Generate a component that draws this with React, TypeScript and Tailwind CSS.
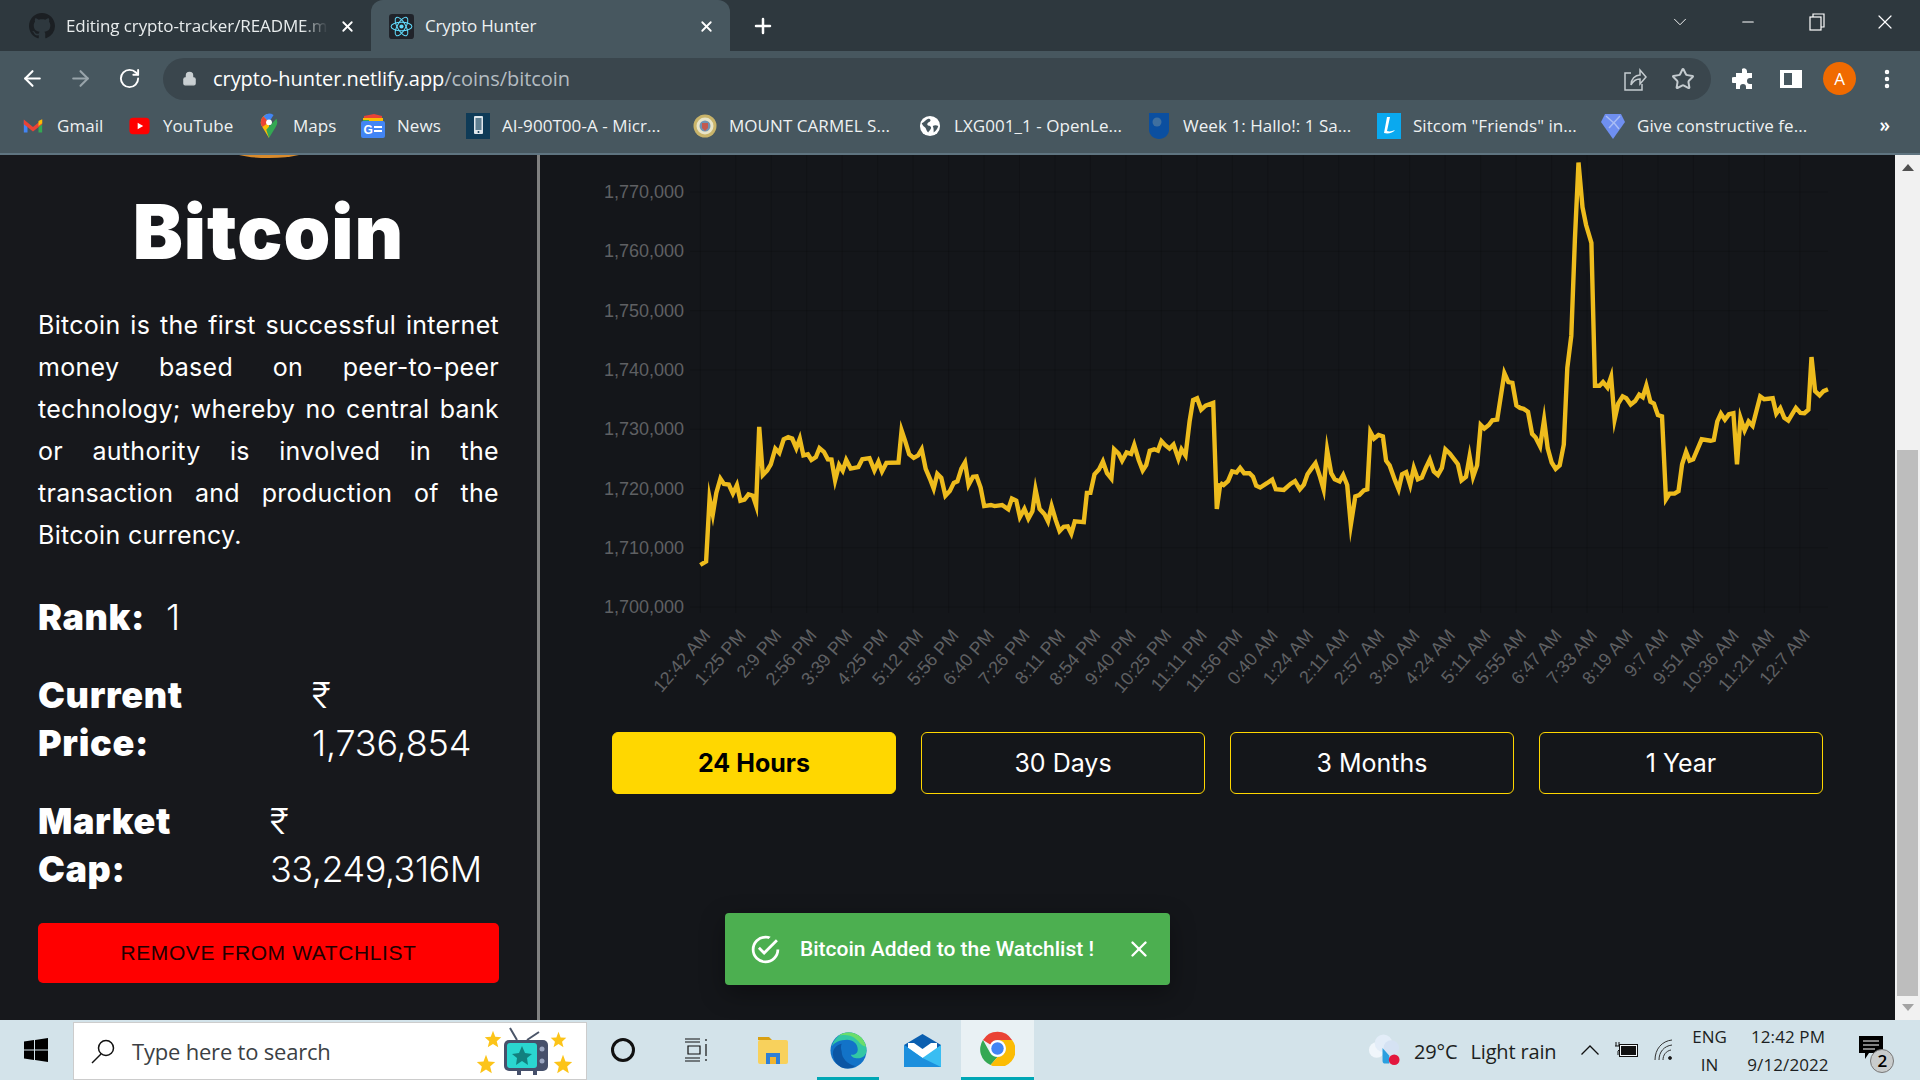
import { ArrowLeft, ArrowRight, ChevronDown, Lock, Minus, MoreVertical, Plus, RotateCw, Star, X } from "lucide-react";

const leftPts = [[359,1162],[372,1152],[380,975],[387,1020],[395,960],[404,920],[412,935],[423,937],[432,962],[441,938],[449,982],[458,979],[467,964],[477,968],[484,995],[491,775],[499,910],[509,897],[517,880],[527,836],[536,848],[546,810],[556,804],[565,808],[574,835],[582,808],[590,855],[600,852],[608,868],[618,860],[626,835],[636,845],[645,866],[653,867],[661,925],[670,882],[678,898],[686,868],[696,892],[713,888],[722,866],[738,863],[749,897],[758,873],[766,900],[776,876],[803,875],[810,785],[818,815],[827,852],[837,862],[847,855],[855,838],[864,893],[875,925],[882,948],[890,907],[899,918],[908,968],[918,955],[927,932],[935,928],[944,892],[952,875],[960,938],[970,915],[978,914],[987,945],[995,997],[1010,994],[1018,997],[1035,994],[1049,1006],[1057,976],[1067,982],[1075,1028],[1085,1005],[1094,1032],[1103,1012],[1110,950],[1119,1005],[1130,1020],[1138,1040],[1146,997],[1155,1035],[1164,1067],[1173,1055],[1182,1054],[1190,1074],[1198,1040],[1218,1042],[1225,960],[1233,960],[1242,908],[1252,895],[1261,872],[1270,905],[1280,920],[1286,838],[1296,850],[1304,870],[1314,847],[1324,851],[1331,826],[1341,868],[1350,897],[1358,882],[1366,842],[1376,838],[1384,842],[1392,815],[1400,826],[1410,836],[1419,825],[1430,865],[1437,838],[1446,855],[1455,760],[1463,700],[1472,695],[1481,727],[1491,716],[1508,708],[1516,1005],[1524,933]];
const rightPts = [[0,932],[8,938],[18,927],[27,900],[37,903],[45,890],[54,905],[66,905],[74,915],[81,940],[90,945],[105,933],[117,923],[125,950],[143,952],[158,935],[168,927],[179,950],[188,937],[196,908],[206,890],[214,877],[224,915],[232,950],[240,840],[249,905],[257,922],[268,928],[276,910],[285,938],[293,1050],[303,970],[312,966],[322,953],[330,950],[337,790],[345,808],[355,798],[365,802],[372,870],[380,883],[392,925],[400,950],[408,908],[417,902],[426,938],[434,890],[443,922],[452,917],[461,890],[470,867],[479,900],[488,910],[497,890],[505,838],[515,850],[533,880],[541,925],[551,915],[559,858],[567,915],[576,883],[584,770],[592,780],[602,770],[610,757],[621,755],[637,625],[646,650],[655,652],[664,715],[672,722],[680,725],[690,733],[699,795],[707,805],[717,830],[726,755],[734,835],[743,875],[752,893],[761,883],[770,825],[778,610],[787,520],[795,250],[803,35],[812,160],[820,210],[832,260],[840,660],[850,660],[858,650],[868,665],[876,635],[884,755],[892,710],[902,690],[910,695],[920,713],[930,703],[939,685],[947,692],[955,660],[964,705],[972,710],[981,742],[990,746],[999,978],[1007,962],[1018,962],[1027,955],[1035,880],[1044,845],[1052,870],[1060,866],[1079,810],[1099,814],[1106,812],[1114,760],[1122,738],[1131,755],[1140,740],[1150,737],[1158,880],[1166,750],[1175,785],[1184,760],[1193,772],[1210,690],[1219,698],[1238,695],[1246,738],[1255,723],[1264,750],[1273,758],[1290,722],[1300,736],[1309,737],[1318,727],[1325,580],[1333,675],[1343,687],[1352,675],[1362,670]];

// traced points are in zoomed crop units, bring them back to chart px
const linePoints = [
	...leftPts.map(([x, y]) => [x / 2.24, y / 2.8 - 5]),
	...rightPts.map(([x, y]) => [x / 2.24 + 680, y / 2.8 - 5]),
]
	.map(([x, y]) => `${x.toFixed(1)},${y.toFixed(1)}`)
	.join(" ");

const yLabels = ["1,770,000", "1,760,000", "1,750,000", "1,740,000", "1,730,000", "1,720,000", "1,710,000", "1,700,000"];
const xLabels = ["12:42 AM", "1:25 PM", "2:9 PM", "2:56 PM", "3:39 PM", "4:25 PM", "5:12 PM", "5:56 PM", "6:40 PM", "7:26 PM", "8:11 PM", "8:54 PM", "9:40 PM", "10:25 PM", "11:11 PM", "11:56 PM", "0:40 AM", "1:24 AM", "2:11 AM", "2:57 AM", "3:40 AM", "4:24 AM", "5:11 AM", "5:55 AM", "6:47 AM", "7:33 AM", "8:19 AM", "9:7 AM", "9:51 AM", "10:36 AM", "11:21 AM", "12:7 AM"];

function Chart() {
	return (
		<svg width="1355" height="577" viewBox="0 0 1355 577" className="block shrink-0" style={{ fontFamily: '"Liberation Sans", sans-serif' }}>
			{yLabels.map((label, i) => {
				const y = 37 + i * 59.3;
				return (
					<g key={label}>
						<line x1="150" x2="1288" y1={y} y2={y} stroke="#000" strokeOpacity="0.15" />
						<text x="144" y={y + 6} textAnchor="end" fontSize="18" fill="#5f6063">{label}</text>
					</g>
				);
			})}
			{xLabels.map((label, i) => {
				const x = 160.3 + i * 35.47;
				return (
					<g key={label}>
						<line x1={x} x2={x} y1="0" y2="458" stroke="#000" strokeOpacity="0.15" />
						<text x={x + 11} y="481" textAnchor="end" fontSize="18" fill="#5f6063" transform={`rotate(-49 ${x + 11} 481)`}>{label}</text>
					</g>
				);
			})}
			<polyline points={linePoints} fill="none" stroke="#EEBC1D" strokeWidth="4.4" strokeLinejoin="miter" strokeMiterlimit="10" />
		</svg>
	);
}

function GmailIcon() {
	return (
		<svg width="22" height="22" viewBox="0 0 24 24">
			<path d="M2 6v13h4V10z" fill="#4285f4" />
			<path d="M22 6v13h-4V10z" fill="#34a853" />
			<path d="M2 5l10 8 10-8v5l-10 8-10-8z" fill="#ea4335" />
			<path d="M18 6.5l4-2V9l-4 3z" fill="#fbbc04" />
		</svg>
	);
}

function YoutubeIcon() {
	return (
		<svg width="23" height="22" viewBox="0 0 24 24">
			<rect x="1" y="3" width="22" height="18" rx="4" fill="#f00" />
			<path d="M10 8.5l6 3.5-6 3.5z" fill="#fff" />
		</svg>
	);
}

function MapsIcon() {
	return (
		<svg width="22" height="26" viewBox="0 0 24 28">
			<path d="M12 1a9 9 0 0 0-9 9c0 2 .7 3.5 1.7 5L12 27z" fill="#fbbc04" />
			<path d="M12 27l7.3-12c1-1.500 1.700-3 1.700-5 0-1.500-.4-3-1-4L9 18z" fill="#34a853" />
			<path d="M3 10a9 9 0 0 1 3-6.700L12 10l-7.300 5C3.700 13.500 3 12 3 10z" fill="#ea4335" />
			<path d="M6 3.300A9 9 0 0 1 17 2l-5 8z" fill="#4285f4" />
			<circle cx="12" cy="10" r="3.200" fill="#fff" />
		</svg>
	);
}

function NewsIcon() {
	return (
		<svg width="24" height="26" viewBox="0 0 24 26">
			<path d="M3 3l10-2 8 2v6H3z" fill="#ea4335" />
			<path d="M2 5h20v5H2z" fill="#fbbc04" />
			<path d="M2 7h6v3H2z" fill="#34a853" />
			<rect x="0" y="8" width="24" height="17" rx="2" fill="#4285f4" />
			<text x="2.500" y="21" fontSize="12" fontWeight="700" fill="#fff" fontFamily="Liberation Sans">G</text>
			<path d="M13 13h8v2h-8zM13 17h8v2h-8z" fill="#fff" />
		</svg>
	);
}

function DocIcon() {
	return (
		<svg width="24" height="26" viewBox="0 0 24 26">
			<rect width="24" height="26" fill="#0f3b57" />
			<rect x="8" y="3" width="9" height="18" rx="1" fill="#dfe7ec" />
			<rect x="9.500" y="5" width="6" height="12" fill="#5f7f91" />
			<circle cx="12.500" cy="19" r="1" fill="#0f3b57" />
		</svg>
	);
}

function CrestIcon() {
	return (
		<svg width="24" height="24" viewBox="0 0 24 24">
			<circle cx="12" cy="12" r="11.500" fill="#c9b46a" />
			<circle cx="12" cy="12" r="8.500" fill="#e8e4c8" />
			<circle cx="12" cy="12" r="5.500" fill="#6f93b2" />
			<path d="M9 9h6v5l-3 3-3-3z" fill="#c25a4f" />
		</svg>
	);
}

function GlobeIcon() {
	return (
		<svg width="22" height="22" viewBox="0 0 24 24">
			<circle cx="12" cy="12" r="11" fill="#fff" />
			<path d="M3 9c3-1 4-4 7-5 3 0 3 2 2 3s-3 1-3 3 3 1 4 3-2 4-3 6c-2-1-2-4-3-5s-3-2-4-5zM15 12c2-1 4-1 6 0-1 3-2 5-5 7 0-3 0-5-1-7z" fill="#47575f" />
		</svg>
	);
}

function ShieldIcon() {
	return (
		<svg width="22" height="26" viewBox="0 0 22 26">
			<path d="M1 0h20v17c0 5-5 9-10 9S1 22 1 17z" fill="#0b4fa0" />
			<circle cx="9" cy="9" r="4.500" fill="#3f6f9f" />
		</svg>
	);
}

function LingqIcon() {
	return (
		<svg width="24" height="26" viewBox="0 0 24 26">
			<rect width="24" height="26" fill="#0aa9ef" />
			<path d="M13 4l-3 14c3 1 5 0 8-1-2 3-7 4-11 3l3-16z" fill="#fff" />
		</svg>
	);
}

function GemIcon() {
	return (
		<svg width="24" height="26" viewBox="0 0 24 26">
			<path d="M4 1h16l4 8-12 17L0 9z" fill="#6f8ff0" />
			<path d="M5 3l9 8M19 3L8 15M14 11l4 5" stroke="#a9bdf5" strokeWidth="1.500" fill="none" />
		</svg>
	);
}

const bookmarks = [
	{ icon: <GmailIcon />, label: "Gmail", width: "w-[46px]" },
	{ icon: <YoutubeIcon />, label: "YouTube", width: "w-[70px]" },
	{ icon: <MapsIcon />, label: "Maps", width: "w-[44px]" },
	{ icon: <NewsIcon />, label: "News", width: "w-[45px]" },
	{ icon: <DocIcon />, label: "AI-900T00-A - Micr...", width: "w-[167px]" },
	{ icon: <CrestIcon />, label: "MOUNT CARMEL S...", width: "w-[165px]" },
	{ icon: <GlobeIcon />, label: "LXG001_1 - OpenLe...", width: "w-[169px]" },
	{ icon: <ShieldIcon />, label: "Week 1: Hallo!: 1 Sa...", width: "w-[170px]" },
	{ icon: <LingqIcon />, label: 'Sitcom "Friends" in...', width: "w-[164px]" },
	{ icon: <GemIcon />, label: "Give constructive fe...", width: "w-[169px]" },
];

function ReactFavicon() {
	return (
		<svg width="25" height="25" viewBox="0 0 24 24">
			<rect width="24" height="24" rx="3" fill="#20232a" />
			<g stroke="#61dafb" strokeWidth="1" fill="none">
				<ellipse cx="12" cy="12" rx="10" ry="4" />
				<ellipse cx="12" cy="12" rx="10" ry="4" transform="rotate(60 12 12)" />
				<ellipse cx="12" cy="12" rx="10" ry="4" transform="rotate(120 12 12)" />
			</g>
			<circle cx="12" cy="12" r="2" fill="#61dafb" />
		</svg>
	);
}

function GithubFavicon() {
	return (
		<svg width="26" height="26" viewBox="0 0 16 16" fill="#1b1f23">
			<path d="M8 0C3.580 0 0 3.580 0 8c0 3.540 2.290 6.530 5.470 7.590.4.070.55-.17.55-.38 0-.19-.01-.82-.01-1.490-2.010.37-2.530-.49-2.690-.94-.09-.23-.48-.94-.82-1.130-.28-.15-.68-.52-.01-.53.63-.01 1.080.58 1.230.82.720 1.210 1.870.870 2.330.660.070-.520.280-.870.510-1.070-1.780-.200-3.640-.890-3.640-3.950 0-.870.310-1.590.820-2.150-.080-.200-.360-1.020.080-2.120 0 0 .670-.210 2.200.820.640-.180 1.320-.270 2-.270s1.360.090 2 .270c1.530-1.040 2.200-.820 2.200-.820.440 1.100.160 1.920.080 2.120.510.560.820 1.270.820 2.150 0 3.070-1.870 3.750-3.650 3.950.290.250.540.730.540 1.480 0 1.070-.010 1.930-.010 2.200 0 .210.150.460.550.380A8.010 8.010 0 0 0 16 8c0-4.420-3.580-8-8-8z" />
		</svg>
	);
}

function ChromeBar() {
	return (
		<div className="shrink-0 font-['Open_Sans',sans-serif] text-white">
			{/* tab strip */}
			<div className="flex h-[51px] bg-[#2e383e]">
				<div className="flex w-[371px] shrink-0 items-center pl-[29px] pt-[1px]">
					<GithubFavicon />
					<span className="ml-[11px] w-[262px] overflow-hidden whitespace-nowrap text-[17px] tracking-[-0.1px] text-[#e8eced] [mask-image:linear-gradient(to_right,black_90%,transparent)]">Editing crypto-tracker/README.md</span>
					<X size={17} strokeWidth={2.500} className="ml-[11px]" />
				</div>
				<div className="flex w-[359px] shrink-0 items-center rounded-t-[12px] bg-[#47575f] pl-[18px] pt-[1px]">
					<ReactFavicon />
					<span className="ml-[11px] w-[274px] text-[17px] tracking-[-0.15px] text-[#eef1f2]">Crypto Hunter</span>
					<X size={17} strokeWidth={2.500} className="ml-[-1px]" />
				</div>
				<Plus size={24} strokeWidth={2.500} className="ml-[21px] mt-[14px]" />
				<div className="ml-auto flex h-[44px] items-center">
					<ChevronDown size={22} strokeWidth={1} className="mr-[48px]" />
					<Minus size={18} strokeWidth={1.500} className="mr-[52px]" />
					<svg width="18" height="18" viewBox="0 0 18 18" fill="none" stroke="#fff" strokeWidth="1.200" className="mr-[46px]">
						<rect x="1" y="4" width="11" height="13" />
						<path d="M4 4V1h11v13h-3" />
					</svg>
					<X size={24} strokeWidth={1.200} className="mr-[23px]" />
				</div>
			</div>
			{/* address bar */}
			<div className="flex h-[51px] items-center bg-[#47575f] pt-[4px]">
				<ArrowLeft size={25} strokeWidth={2} className="ml-[20px]" />
				<ArrowRight size={25} strokeWidth={2} className="ml-[23px] text-[#98a4aa]" />
				<RotateCw size={23} strokeWidth={2} className="ml-[25px]" />
				<div className="ml-[22px] flex h-[42px] w-[1548px] items-center rounded-full bg-[#3a464d] pl-[19px]">
					<Lock size={15} strokeWidth={2} fill="#c9cfd2" className="text-[#c9cfd2]" />
					<span className="ml-[16px] text-[20px] tracking-[-0.05px] text-white">crypto-hunter.netlify.app<span className="text-[#b4bcc1]">/coins/bitcoin</span></span>
					<svg width="24" height="26" viewBox="0 0 24 26" fill="none" stroke="#c4cbcf" strokeWidth="1.500" className="ml-auto mr-[24px]">
						<path d="M8 7H2v17h17v-6" />
						<path d="M8 19c0-6 4-10 9-10V4l6 7-6 7v-5c-4 0-7 2-9 6z" />
					</svg>
					<Star size={24} strokeWidth={2} className="mr-[16px] text-[#c4cbcf]" />
				</div>
				<svg width="24" height="24" viewBox="0 0 24 24" fill="#fff" className="ml-[21px]">
					<path d="M10 2a3 3 0 0 1 5 2v2h5v5h-2a3 3 0 0 0 0 6h2v5h-6v-2a3 3 0 0 0-6 0v2H4v-6H2a3 3 0 0 1 0-6h2V6h6z" />
				</svg>
				<div className="ml-[24px] h-[18px] w-[22px] border-[3px] border-l-[4px] border-r-[10px] border-white" />
				<div className="ml-[21px] flex h-[33px] w-[33px] items-center justify-center rounded-full bg-[#f06a00] text-[17px]">A</div>
				<MoreVertical size={24} strokeWidth={2.500} className="ml-[19px]" />
			</div>
			{/* bookmarks */}
			<div className="flex h-[51px] items-center bg-[#47575f] pb-[4px] pl-[21px]">
				{bookmarks.map((b) => (
					<div key={b.label} className="mr-[24px] flex items-center">
						<div className="flex w-[24px] justify-center">{b.icon}</div>
						<span className={`ml-[12px] whitespace-nowrap text-[17px] tracking-[0.05px] text-[#eef1f2] ${b.width}`}>{b.label}</span>
					</div>
				))}
				<span className="ml-auto mr-[30px] text-[19px] font-semibold">»</span>
			</div>
			<div className="h-[2px] bg-[#5f7480]" />
		</div>
	);
}

const descLines = [
	"Bitcoin is the first successful internet",
	"money based on peer-to-peer",
	"technology; whereby no central bank",
	"or authority is involved in the",
	"transaction and production of the",
];

function CoinPanel() {
	return (
		<aside className="flex w-[540px] shrink-0 flex-col border-r-[3px] border-[#808080] bg-[#17181c] font-['Inter',sans-serif] text-white">
			<svg width="60" height="3" viewBox="0 0 60 3" className="mx-auto block">
				<path d="M0 0h60c-8 2-18 3-30 3S8 2 0 0z" fill="#d98a2b" />
			</svg>
			<h1 className="mt-[31px] text-center text-[75px] font-black leading-[86px] tracking-[1px]">Bitcoin</h1>
			<div className="mt-[29px] px-[38px] text-[25px] font-normal leading-[42px] tracking-[0.3px]">
				{descLines.map((line) => (
					<p key={line} className="[text-align-last:justify]">{line}</p>
				))}
				<p>Bitcoin currency.</p>
			</div>
			<div className="mt-[37px] flex items-center px-[38px] text-[36px] leading-[48px] tracking-[0.6px]">
				<span className="font-black">Rank:</span>
				<span className="ml-[21px] font-light">1</span>
			</div>
			<div className="mt-[30px] flex px-[38px] text-[36px] leading-[48px]">
				<span className="w-[274px] font-black tracking-[0.7px]">Current<br />Price:</span>
				<span className="font-light tracking-[-0.2px]">₹<br />1,736,854</span>
			</div>
			<div className="mt-[30px] flex px-[38px] text-[36px] leading-[48px]">
				<span className="w-[232px] font-black tracking-[0.6px]">Market<br />Cap:</span>
				<span className="font-light tracking-[-0.5px]">₹<br />33,249,316M</span>
			</div>
			<button type="button" className="mx-[38px] mt-[30px] h-[60px] rounded-[5px] bg-[#f00] font-['Liberation_Sans',sans-serif] text-[21px] tracking-[0.6px] text-[#210000]">REMOVE FROM WATCHLIST</button>
		</aside>
	);
}

function Toast() {
	return (
		<div className="absolute left-[725px] top-[758px] flex h-[72px] w-[445px] items-center rounded-[4px] bg-[#4caf50] font-['Roboto',sans-serif] text-white shadow-[0_8px_24px_rgba(0,0,0,0.35)]">
			<svg width="33" height="33" viewBox="0 0 24 24" fill="#fff" className="ml-[24px]">
				<path d="M20,12A8,8 0 0,1 12,20A8,8 0 0,1 4,12A8,8 0 0,1 12,4C12.76,4 13.5,4.11 14.2,4.31L15.77,2.74C14.61,2.26 13.34,2 12,2A10,10 0 0,0 2,12A10,10 0 0,0 12,22A10,10 0 0,0 22,12M7.91,10.08L6.5,11.5L11,16L21,6L19.59,4.58L11,13.17L7.91,10.08Z" />
			</svg>
			<span className="ml-[18px] whitespace-nowrap pt-[1px] text-[21px] font-medium">Bitcoin Added to the Watchlist !</span>
			<X size={26} strokeWidth={2.200} className="ml-auto mr-[18px]" />
		</div>
	);
}

const ranges = ["24 Hours", "30 Days", "3 Months", "1 Year"];

function ChartPanel() {
	return (
		<section className="flex min-w-0 flex-1 flex-col bg-[#14161a]">
			<Chart />
			<div className="flex gap-[25px] pl-[72px] font-['Inter',sans-serif]">
				{ranges.map((r, i) => (
					<button
						key={r}
						type="button"
						className={`h-[62px] w-[284px] rounded-[6px] border border-[#ffd700] pt-[2px] text-[25px] ${i === 0 ? "bg-[#ffd700] font-bold text-black" : "font-normal text-white"}`}
					>
						{r}
					</button>
				))}
			</div>
		</section>
	);
}

function Scrollbar() {
	return (
		<div className="flex w-[25px] shrink-0 flex-col items-center bg-[#f1f1f1]">
			<div className="mt-[9px] h-0 w-0 border-x-[6px] border-b-[7px] border-x-transparent border-b-[#505050]" />
			<div className="mt-[279px] h-[546px] w-[21px] bg-[#bdbdbd]" />
			<div className="mt-[8px] h-0 w-0 border-x-[6px] border-t-[7px] border-x-transparent border-t-[#a3a3a3]" />
		</div>
	);
}

function GoldStar({ size }: { size: number }) {
	return (
		<svg width={size} height={size} viewBox="0 0 24 24" fill="#fcc419">
			<polygon points="12,1 15,9 23,9.500 17,15 19,23 12,18.500 5,23 7,15 1,9.500 9,9" />
		</svg>
	);
}

function TvSticker() {
	return (
		<div className="flex w-[100px] items-center">
			<div className="flex flex-col gap-[6px] pt-[2px]">
				<div className="ml-[8px]"><GoldStar size={18} /></div>
				<GoldStar size={20} />
			</div>
			<svg width="50" height="48" viewBox="0 0 50 48" className="-mx-[1px]">
				<path d="M16 13L9 1M26 13l12-8" stroke="#4a5568" strokeWidth="2" />
				<rect x="3" y="13" width="44" height="31" rx="5" fill="#46506b" />
				<rect x="16" y="44" width="4" height="4" fill="#46506b" />
				<rect x="32" y="44" width="4" height="4" fill="#46506b" />
				<rect x="6" y="16" width="30" height="25" rx="3" fill="#2ad6d0" />
				<polygon points="21,19 24,26 31,27 26,31 27,38 21,34 15,38 16,31 11,27 18,26" fill="#12807f" />
				<circle cx="41" cy="22" r="2.500" fill="#9aa5c0" />
				<circle cx="41" cy="34" r="2.500" fill="#9aa5c0" />
			</svg>
			<div className="flex flex-col gap-[6px] pt-[2px]">
				<GoldStar size={17} />
				<div className="ml-[3px]"><GoldStar size={20} /></div>
			</div>
		</div>
	);
}

function FolderIcon() {
	return (
		<svg width="32" height="32" viewBox="0 0 32 32">
			<path d="M1 3h11l3 3h-14z" fill="#d9a012" />
			<rect x="1" y="6" width="30" height="24" rx="2" fill="#f8d15c" />
			<path d="M9 19h14v11h-4v-7h-6v7H9z" fill="#2f7fd6" />
			<rect x="13" y="23" width="6" height="7" fill="#f2b52e" />
		</svg>
	);
}

function EdgeIcon() {
	return (
		<svg width="37" height="37" viewBox="0 0 38 38">
			<circle cx="19" cy="19" r="18.500" fill="#1273c8" />
			<path d="M2 14C5 5 12 .5 19 .5 30 .5 37.500 9 37.500 19c0 5-4 8-9 8-4 0-7-2-7-4 2 1 7 0 7-5 0-6-5-10-11-10-7 0-13 3-15 6z" fill="#32c7a4" />
			<path d="M37 15C35 6 28 .5 19 .5c-4 0-7 1-10 3 4-1 14-1 19 5 3 3 5 6 9 6.500z" fill="#6bdd6b" />
			<path d="M12 20c0 7 6 13 14 15-3 2-6 2.500-8 2.500C8 37.500 3 29 3 22c0-5 4-9 9-10-1 2-1 5 0 8z" fill="#0b56a4" />
		</svg>
	);
}

function MailIcon() {
	return (
		<svg width="37" height="33" viewBox="0 0 37 33">
			<path d="M0 11L18.500 0 37 11v8H0z" fill="#0b5fb0" />
			<path d="M4 9h29v9l-14.500 6L4 18z" fill="#fff" />
			<path d="M10 9L18.500 3 27 9l-8.500 6z" fill="#0b5fb0" />
			<path d="M0 11l18.500 13L37 11v22H0z" fill="#39bdf2" />
			<path d="M0 11l18.500 13L37 33H0z" fill="#1c8fdd" />
		</svg>
	);
}

function ChromeIcon() {
	return (
		<svg width="35" height="35" viewBox="0 0 48 48">
			<path d="M24 1a23 23 0 0 1 20 11.500H24a11.500 11.500 0 0 0-10 6L4.100 12.500A23 23 0 0 1 24 1z" fill="#ea4335" />
			<path d="M4.100 12.500L14 30a11.500 11.500 0 0 0 10 5.500L14.500 46.600A23 23 0 0 1 4.100 12.500z" fill="#34a853" />
			<path d="M44 12.500a23 23 0 0 1-29.500 34.100L24 35.500a11.500 11.500 0 0 0 10-17.300 11.500 11.500 0 0 0-10-5.700z" fill="#fbbc04" />
			<circle cx="24" cy="24" r="11" fill="#fff" />
			<circle cx="24" cy="24" r="8.500" fill="#4285f4" />
		</svg>
	);
}

function Taskbar() {
	return (
		<footer className="flex h-[60px] shrink-0 items-stretch bg-[#d3e3ea] font-['Open_Sans',sans-serif] text-[#1c1f22]">
			<div className="flex w-[73px] items-center justify-center pr-[2px]">
				<svg width="24" height="24" viewBox="0 0 24 24" fill="#000">
					<path d="M0 3.500L10 2v9.500H0zM11 1.900L24 0v11.500H11zM0 12.500h10V22L0 20.500zM11 12.500h13V24l-13-1.900z" />
				</svg>
			</div>
			<div className="mt-[2px] flex h-[58px] w-[514px] items-center border border-[#cccccc] bg-white">
				<svg width="26" height="26" viewBox="0 0 26 26" fill="none" stroke="#111" strokeWidth="1.500" className="ml-[16px]">
					<circle cx="16" cy="10" r="7.500" />
					<path d="M11 16L2 25" />
				</svg>
				<span className="ml-[16px] text-[22px] tracking-[-0.2px] text-[#3c3f44]">Type here to search</span>
				<div className="ml-auto mr-[10px]"><TvSticker /></div>
			</div>
			<div className="ml-[24px] flex w-[25px] items-center">
				<div className="h-[24px] w-[24px] rounded-full border-[3px] border-[#111]" />
			</div>
			<div className="ml-[49px] flex w-[23px] items-center">
				<svg width="23" height="24" viewBox="0 0 23 24" fill="none" stroke="#111" strokeWidth="1.200">
					<path d="M0 1h15M0 4h15M3 8h12v8H3zM0 20h15M0 23h15M21 1v2M21 6v12M21 21v2" />
				</svg>
			</div>
			<div className="ml-[49px] flex w-[33px] items-center"><FolderIcon /></div>
			<div className="ml-[27px] flex w-[62px] flex-col items-center justify-end border-b-[3px] border-[#00a7b5] pb-[8px]"><EdgeIcon /></div>
			<div className="ml-[25px] flex w-[37px] items-center"><MailIcon /></div>
			<div className="ml-[20px] flex w-[73px] items-center justify-center border-b-[3px] border-[#00a7b5] bg-[#e9f1f4]"><ChromeIcon /></div>
			<div className="ml-[332px] flex w-[35px] items-center">
				<svg width="36" height="32" viewBox="0 0 36 32">
					<circle cx="11" cy="16" r="8" fill="#f0f6fb" />
					<circle cx="18" cy="9" r="9" fill="#e3edf8" />
					<circle cx="26" cy="14" r="8" fill="#d5e2f3" />
					<path d="M17 14l7 8v8h-4a3 3 0 0 1-3-3z" fill="#2ba0e0" />
					<circle cx="29" cy="26" r="5.500" fill="#e3173e" />
				</svg>
			</div>
			<div className="ml-[13px] flex items-center gap-[13px] pt-[3px] text-[20px] tracking-[-0.15px]">
				<span>29°C</span>
				<span>Light rain</span>
			</div>
			<div className="ml-[25px] flex w-[18px] items-center">
				<svg width="18" height="10" viewBox="0 0 18 10" fill="none" stroke="#111" strokeWidth="1.300"><path d="M0.500 9.500L9 1l8.500 8.500" /></svg>
			</div>
			<div className="ml-[15px] flex w-[24px] items-center">
				<svg width="24" height="16" viewBox="0 0 24 16">
					<path d="M2 0v4M5 0v4M1 4h5v3L4 9v4" fill="none" stroke="#111" />
					<rect x="6.500" y="3.500" width="16" height="10" fill="#111" stroke="#f4f8fa" strokeWidth="1" />
					<rect x="5.500" y="2.500" width="18" height="12" fill="none" stroke="#111" strokeWidth="1" />
				</svg>
			</div>
			<div className="ml-[16px] flex w-[18px] items-center">
				<svg width="18" height="22" viewBox="0 0 18 22" fill="none" stroke="#333" strokeWidth="1">
					<path d="M1 21C1 10 8 2 18 1M5 21C5 13 10 7 18 6M9 21C9 16 12 12 17 11" />
					<circle cx="16" cy="19" r="1.500" fill="#111" />
				</svg>
			</div>
			<div className="ml-[20px] flex w-[34px] flex-col items-center justify-center pt-[1px] text-[17px] leading-[28px]">
				<span>ENG</span>
				<span>IN</span>
			</div>
			<div className="ml-[19px] flex w-[85px] flex-col items-center justify-center whitespace-nowrap pt-[1px] text-[17px] leading-[28px] tracking-[0.1px]">
				<span>12:42 PM</span>
				<span>9/12/2022</span>
			</div>
			<div className="relative ml-[29px] flex w-[24px] items-center pb-[6px]">
				<svg width="24" height="28" viewBox="0 0 24 28">
					<path d="M0 3h24v17H10l-4 6v-6H0z" fill="#000" />
					<path d="M4 8h16M4 12h16M4 16h12" stroke="#fff" strokeWidth="1" />
				</svg>
				<div className="absolute left-[11px] top-[29px] flex h-[24px] w-[24px] items-center justify-center rounded-full border border-[#777] bg-[#c9cccc] text-[17px] font-semibold text-black">2</div>
			</div>
		</footer>
	);
}

export default function App() {
	return (
		<div className="flex h-screen w-[1920px] flex-col overflow-hidden">
			<ChromeBar />
			<main className="relative flex min-h-0 flex-1">
				<CoinPanel />
				<ChartPanel />
				<Scrollbar />
				<Toast />
			</main>
			<Taskbar />
		</div>
	);
}
